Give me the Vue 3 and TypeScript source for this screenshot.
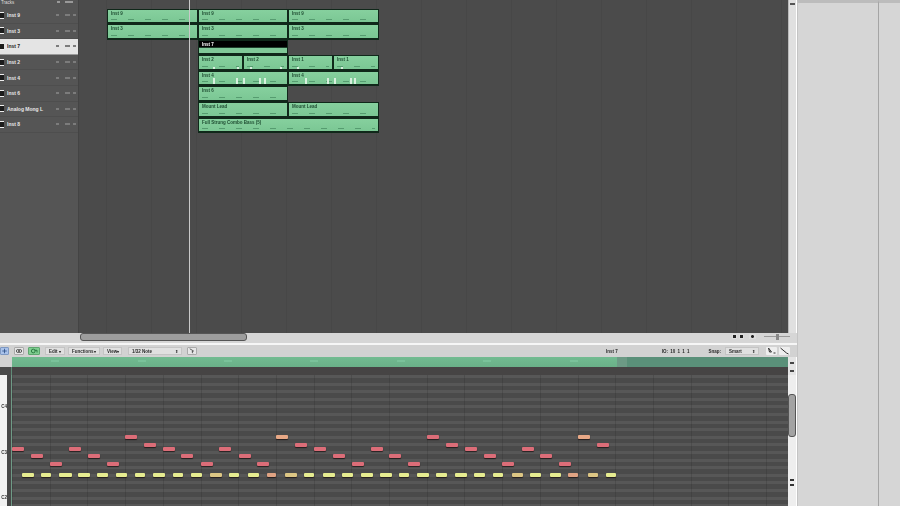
<template>
  <div class="app">
    <div class="main">
      <div class="arrange">
        <div class="tracklist">
          <div class="tracklist-head"><span>Tracks</span><i></i><i class="wide"></i></div>
          <div
            v-for="t in tracks"
            :key="t.name"
            :class="['track', { 'track--selected': t.selected }]"
          >
            <span class="track-icon"></span>
            <span class="track-name">{{ t.name }}</span>
            <span class="track-btn"></span>
            <span class="track-btn track-btn--wide"></span>
            <span class="track-btn"></span>
          </div>
        </div>
        <div class="canvas">
          <div v-for="(lane, i) in lanes" :key="i" class="lane">
            <div
              v-for="r in lane"
              :key="r.x"
              :class="['region', { 'region--selected': r.selected, 'region--short': r.shortMarks }]"
              :style="{ left: r.x + 'px', width: r.w + 'px' }"
            >
              <span class="region-label">{{ r.label }}</span>
              <span class="region-midi"></span>
              <span
                v-for="m in r.marks"
                :key="m"
                class="region-mark"
                :style="{ left: m + 'px' }"
              ></span>
            </div>
          </div>
          <div class="playhead"></div>
        </div>
        <div class="vscroll"><span class="vscroll-grip"></span></div>
      </div>

      <div class="hscroll">
        <div class="hscroll-thumb"></div>
        <div class="hscroll-tools">
          <span class="mini"></span>
          <span class="mini"></span>
          <span class="mini mini--gap"></span>
          <span class="zoom-slider"><i></i></span>
        </div>
      </div>

      <div class="toolbar">
        <button class="tb tb--blue"><svg viewBox="0 0 8 8"><path d="M4 1v6M1 4h6" /></svg></button>
        <button class="tb tb--link"><svg viewBox="0 0 9 8"><circle cx="3" cy="4" r="2" /><circle cx="6" cy="4" r="2" /></svg></button>
        <button class="tb tb--green"><svg viewBox="0 0 12 8"><circle cx="5" cy="4" r="2.5" /><path d="M7 3h3v3" /></svg></button>
        <span class="menu menu--edit">Edit <b>▾</b></span>
        <span class="menu menu--functions">Functions <b>▾</b></span>
        <span class="menu menu--view">View <b>▾</b></span>
        <span class="select select--note">1/32 Note<b>⇕</b></span>
        <button class="tb tb--catch"><svg viewBox="0 0 8 8"><path d="M1 1l5 3-2 1 1 2" /></svg></button>
        <span class="tb-spacer"></span>
        <span class="label label--region">Inst 7</span>
        <span class="label label--pos">IO: 10 1 1 1</span>
        <span class="label">Snap:</span>
        <span class="select select--snap">Smart<b>⇕</b></span>
        <button class="tb tb--tool tb--first"><svg viewBox="0 0 10 8"><path d="M2 1l3 4H3zM7 6h2" /></svg></button>
        <button class="tb tb--tool"><svg viewBox="0 0 10 8"><path d="M1 1l6 5 2 1" /></svg></button>
      </div>

      <div class="roll-top">
        <div class="roll-top-main">
          <div class="ruler">
            <span class="ruler-corner"></span>
            <div class="ruler-cycle"><span v-for="n in 7" :key="n"></span></div>
            <span class="ruler-end"></span>
          </div>
          <div class="roll-head"><span class="roll-head-corner"></span><span class="roll-head-line"></span></div>
        </div>
        <div class="roll-top-side"><i></i><i></i></div>
      </div>

      <div class="roll">
        <div class="keys">
          <span v-for="k in keyLabels" :key="k">{{ k }}</span>
        </div>
        <div class="keys-gap"></div>
        <div class="grid">
          <div
            v-for="n in notes"
            :key="n.x + '-' + n.y"
            :class="['note', 'note--' + n.kind]"
            :style="{ left: n.x + 'px', top: n.y + 'px', width: n.w + 'px' }"
          ></div>
        </div>
        <div class="rollscroll">
          <span class="rollscroll-thumb"></span>
          <span class="rollscroll-arrows"><i></i><i></i></span>
        </div>
      </div>
    </div>

    <div class="side">
      <div class="side-a"></div>
      <div class="side-b"></div>
    </div>
  </div>
</template>

<script setup lang="ts">
interface Region {
  x: number
  w: number
  label: string
  selected?: boolean
  marks?: number[]
  shortMarks?: boolean
}

interface Note {
  x: number
  y: number
  w: number
  kind: string
}

const tracks = [
  { name: 'Inst 9' },
  { name: 'Inst 3' },
  { name: 'Inst 7', selected: true },
  { name: 'Inst 2' },
  { name: 'Inst 4' },
  { name: 'Inst 6' },
  { name: 'Analog Mong L' },
  { name: 'Inst 8' }
]

// x is relative to the arrange canvas, which starts at 79px
const lanes: Region[][] = [
  [
    { x: 28, w: 91, label: 'Inst 9' },
    { x: 119, w: 90, label: 'Inst 9' },
    { x: 209, w: 91, label: 'Inst 9' }
  ],
  [
    { x: 28, w: 91, label: 'Inst 3' },
    { x: 119, w: 90, label: 'Inst 3' },
    { x: 209, w: 91, label: 'Inst 3' }
  ],
  [{ x: 119, w: 90, label: 'Inst 7', selected: true }],
  [
    { x: 119, w: 45, label: 'Inst 2', marks: [14, 38], shortMarks: true },
    { x: 164, w: 45, label: 'Inst 2', marks: [6, 36], shortMarks: true },
    { x: 209, w: 45, label: 'Inst 1', marks: [8], shortMarks: true },
    { x: 254, w: 46, label: 'Inst 1', marks: [7], shortMarks: true }
  ],
  [
    { x: 119, w: 90, label: 'Inst 4', marks: [14, 37, 44, 60, 65] },
    { x: 209, w: 91, label: 'Inst 4', marks: [16, 38, 45, 61, 65] }
  ],
  [{ x: 119, w: 90, label: 'Inst 6' }],
  [
    { x: 119, w: 90, label: 'Mount Lead' },
    { x: 209, w: 91, label: 'Mount Lead' }
  ],
  [{ x: 119, w: 181, label: 'Full Strung Combo Bass (5)' }]
]

const keyLabels = ['C4', 'C3', 'C2']

// pairs of [left edge, width] as seen on screen
const bass: [number, number][] = [
  [22, 12], [41, 10], [59, 13], [78, 12], [97, 11], [116, 11], [135, 10], [153, 12],
  [173, 10], [191, 11], [210, 12], [229, 10], [248, 11], [267, 9], [285, 12], [304, 10],
  [323, 12], [342, 11], [361, 12], [380, 12], [399, 10], [417, 12], [436, 11], [455, 12],
  [474, 11], [493, 10], [512, 11], [530, 11], [550, 11], [568, 10], [588, 10], [606, 10]
]

// pairs of [left edge, row y]
const lead: [number, number][] = [
  [12, 449], [31, 456], [50, 464], [69, 449], [88, 456], [107, 464], [125, 437], [144, 445],
  [163, 449], [181, 456], [201, 464], [219, 449], [239, 456], [257, 464], [276, 437], [295, 445],
  [314, 449], [333, 456], [352, 464], [371, 449], [389, 456], [408, 464], [427, 437], [446, 445],
  [465, 449], [484, 456], [502, 464], [522, 449], [540, 456], [559, 464], [578, 437], [597, 445]
]

// the grid starts at x=12, y=375
const notes: Note[] = [
  ...lead.map(([x, y]) => ({
    x: x - 12,
    y: y - 2 - 375,
    w: 12,
    kind: y === 437 && (x === 276 || x === 578) ? 'orange' : 'red'
  })),
  ...bass.map(([x, w]) => ({
    x: x - 12,
    y: 98,
    w,
    kind: x === 267 || x === 568 ? 'peach' : x === 210 || x === 285 || x === 512 || x === 588 ? 'tan' : 'yellow'
  }))
]
</script>

<style>
html,
body {
  margin: 0;
  background: #d6d6d6;
  overflow: hidden;
}
</style>

<style scoped>
.app {
  display: flex;
  width: 900px;
  height: 506px;
  overflow: hidden;
  font-family: "Liberation Sans", Arial, sans-serif;
  filter: blur(0.7px);
}

.main {
  display: flex;
  flex-direction: column;
  width: 797px;
  height: 506px;
}

.arrange {
  display: flex;
  height: 333px;
}

.tracklist {
  width: 79px;
  background: #555;
  border-right: 1px solid #444;
  box-sizing: border-box;
}

.tracklist-head {
  display: flex;
  gap: 5px;
  height: 8px;
  padding-left: 1px;
  box-sizing: border-box;
  font-size: 4.5px;
  line-height: 6px;
  color: #ddd;
}

.tracklist-head span {
  flex: 1;
}

.tracklist-head i {
  width: 3px;
  height: 2px;
  margin-top: 1px;
  background: #999;
}

.tracklist-head i.wide {
  width: 8px;
  margin-right: 5px;
}

.track {
  display: flex;
  align-items: center;
  gap: 3px;
  height: 15.6px;
  padding-right: 2px;
  box-sizing: border-box;
  border-bottom: 1px solid #4e4e4e;
  color: #e8e8e8;
  font-size: 5px;
  font-weight: 700;
}

.track--selected {
  background: #e4e4e4;
  color: #222;
  border-bottom-color: #999;
}

.track-icon {
  width: 4px;
  height: 5px;
  border-top: 1px solid #eee;
  border-bottom: 1px solid #eee;
  background: #1c1c1c;
  flex: none;
}

.track-name {
  flex: 1;
  min-width: 0;
  white-space: nowrap;
  overflow: hidden;
}

.track-btn {
  width: 3px;
  height: 2px;
  background: #7c7c7c;
  flex: none;
}

.track-btn--wide {
  width: 5px;
  margin-left: 3px;
}

.canvas {
  position: relative;
  flex: 1;
  padding-top: 8.5px;
  background-color: #4b4b4b;
  background-image: repeating-linear-gradient(90deg, #474747 0 1px, transparent 1px 45px);
  background-position: 27px 0;
  overflow: hidden;
}

.lane {
  position: relative;
  height: 15.6px;
}

.region {
  position: absolute;
  top: 0;
  height: 15.6px;
  box-sizing: border-box;
  border: 1px solid #10281a;
  border-bottom-width: 2px;
  background: linear-gradient(#86d09e, #7bc794);
  overflow: hidden;
}

.region--selected {
  background: linear-gradient(#000 0 6px, #1e3d2a 6px 7px, #80c998 7px);
}

.region-label {
  display: block;
  padding: 1px 0 0 3px;
  font-size: 4.5px;
  line-height: 5px;
  font-weight: 700;
  white-space: nowrap;
  color: #1f4d32;
}

.region--selected .region-label {
  color: #fff;
}

.region-midi {
  position: absolute;
  left: 3px;
  right: 3px;
  bottom: 2px;
  height: 1px;
  background: repeating-linear-gradient(90deg, #569c70 0 6px, transparent 6px 17px);
}

.region--selected .region-midi {
  display: none;
}

.region-mark {
  position: absolute;
  bottom: 0;
  width: 2px;
  height: 6px;
  background: #d8f0de;
}

.region--short .region-mark {
  height: 2px;
}

.playhead {
  position: absolute;
  top: 0;
  bottom: 0;
  left: 110px;
  width: 1px;
  background: #c9c9c9;
}

.vscroll {
  width: 9px;
  background: #e0e0e0;
  border-left: 1px solid #bbb;
  border-right: 1px solid #fff;
  box-sizing: border-box;
}

.vscroll-grip {
  display: block;
  height: 2px;
  margin: 3px 1px 0;
  background: #555;
}

.hscroll {
  display: flex;
  justify-content: space-between;
  align-items: center;
  height: 12px;
  padding: 0 7px 3px 80px;
  box-sizing: border-box;
  background: #d6d6d6;
  border-bottom: 2px solid #f6f6f6;
}

.hscroll-thumb {
  width: 167px;
  height: 8px;
  box-sizing: border-box;
  border: 1px solid #555;
  border-radius: 3px;
  background: #9d9d9d;
}

.hscroll-tools {
  display: flex;
  align-items: center;
  gap: 2px;
}

.mini {
  width: 5px;
  height: 5px;
  background: radial-gradient(#222 0 1.5px, #ddd 2px);
}

.mini--gap {
  margin: 0 6px 0 3px;
  width: 7px;
}

.zoom-slider {
  display: flex;
  justify-content: center;
  width: 26px;
  height: 1px;
  background: #999;
  align-items: center;
}

.zoom-slider i {
  width: 3px;
  height: 6px;
  background: #888;
}

.toolbar {
  display: flex;
  align-items: center;
  height: 12px;
  padding-right: 7px;
  background: #d2d2d2;
  font-size: 4.5px;
  font-weight: 700;
  color: #2a2a2a;
}

.tb {
  display: flex;
  align-items: center;
  justify-content: center;
  padding: 0;
  height: 8px;
  border: 1px solid #aaa;
  border-radius: 1px;
  background: #e6e6e6;
}

.tb svg {
  width: 100%;
  height: 100%;
  fill: none;
  stroke: #333;
  stroke-width: 1;
}

.tb--blue {
  width: 9px;
  background: #a9c2ea;
  border-color: #7e99c4;
}

.tb--blue svg {
  stroke: #23457e;
}

.tb--link {
  width: 10px;
  margin-left: 5px;
}

.tb--green {
  width: 12px;
  margin-left: 4px;
  background: #7fcf91;
  border-color: #5ea66f;
}

.tb--green svg {
  stroke: #14602b;
}

.menu,
.select {
  display: flex;
  align-items: center;
  justify-content: space-between;
  box-sizing: border-box;
  height: 8px;
  padding: 0 3px;
  background: #e0e0e0;
  border: 1px solid #c4c4c4;
  white-space: nowrap;
}

.menu b,
.select b {
  font-size: 4px;
}

.menu--edit {
  width: 20px;
  margin-left: 5px;
}

.menu--functions {
  width: 32px;
  margin-left: 3px;
}

.menu--view {
  width: 19px;
  margin-left: 3px;
}

.select--note {
  width: 54px;
  margin-left: 6px;
}

.tb--catch {
  width: 10px;
  margin-left: 5px;
}

.tb-spacer {
  flex: 1;
}

.label--region {
  margin-right: 44px;
}

.label--pos {
  margin-right: 19px;
  word-spacing: 1px;
}

.select--snap {
  width: 34px;
  margin-left: 4px;
}

.tb--tool {
  width: 11px;
  background: #eee;
  border: none;
  margin-left: 2px;
}

.tb--first {
  margin-left: 7px;
}

.roll-top {
  display: flex;
  height: 18px;
}

.roll-top-main {
  flex: 1;
  min-width: 0;
}

.roll-top-side {
  display: flex;
  flex-direction: column;
  gap: 6px;
  width: 9px;
  padding: 5px 2px 0;
  box-sizing: border-box;
  background: #e4e4e4;
  border-right: 1px solid #fff;
}

.roll-top-side i {
  height: 2px;
  background: #444;
}

.ruler {
  display: flex;
  height: 10px;
  background: #5a9079;
}

.ruler-corner {
  width: 12px;
  background: #d2d2d2;
}

.ruler-cycle {
  display: flex;
  justify-content: space-around;
  width: 605px;
  background: linear-gradient(#72bb91, #6ab088);
}

.ruler-cycle span {
  width: 8px;
  height: 2px;
  margin-top: 3px;
  background: #7ac29a;
}

.ruler-end {
  width: 10px;
  background: #6c9a85;
}

.roll-head {
  display: flex;
  height: 8px;
  background: #464444;
}

.roll-head-corner {
  width: 11px;
  background: #4a4a4a;
}

.roll-head-line {
  width: 1px;
  background: #5f8a76;
}

.roll {
  position: relative;
  display: flex;
  flex: 1;
  min-height: 0;
}

.keys {
  display: flex;
  flex-direction: column;
  gap: 40.5px;
  width: 7px;
  padding-top: 29px;
  box-sizing: border-box;
  background: #f2f2f2;
  font-size: 4.5px;
  line-height: 5px;
  font-weight: 700;
  color: #333;
  text-align: right;
}

.keys-gap {
  width: 5px;
  background: linear-gradient(90deg, #474747 0 4px, #6f9a86 4px);
}

.grid {
  position: relative;
  flex: 1;
  background-color: #4a4a4a;
  background-image:
    repeating-linear-gradient(90deg, rgba(30, 30, 30, 0.18) 0 1px, transparent 1px 37.7px),
    repeating-linear-gradient(#575757 0 3px, #4a4a4a 3px 7.6px);
  overflow: hidden;
}

.note {
  position: absolute;
  height: 4px;
  border-radius: 1px;
  box-shadow: 0 1px 1px rgba(20, 10, 10, 0.7);
}

.note--red {
  background: #dc6d78;
}

.note--orange {
  background: #e8a886;
}

.note--yellow {
  background: #e6ec90;
}

.note--tan {
  background: #dcc684;
}

.note--peach {
  background: #e0a383;
}

.rollscroll {
  display: flex;
  flex-direction: column;
  width: 9px;
  padding-top: 19px;
  box-sizing: border-box;
  background: #eee;
  border-right: 1px solid #fff;
}

.rollscroll-thumb {
  height: 43px;
  box-sizing: border-box;
  border: 1px solid #555;
  border-radius: 3px;
  background: #a3a3a3;
}

.rollscroll-arrows {
  display: flex;
  flex-direction: column;
  gap: 3px;
  margin: 42px 2px 0;
}

.rollscroll-arrows i {
  height: 2px;
  background: #333;
}

.side {
  display: flex;
  flex: 1;
  background: #d6d6d6;
}

.side-a {
  width: 81px;
  border-top: 3px solid #bcbcbc;
  border-left: 1px solid #c4c4c4;
  box-sizing: border-box;
}

.side-b {
  flex: 1;
  border-top: 3px solid #bcbcbc;
  border-left: 1px solid #a5a5a5;
  box-sizing: border-box;
}
</style>
